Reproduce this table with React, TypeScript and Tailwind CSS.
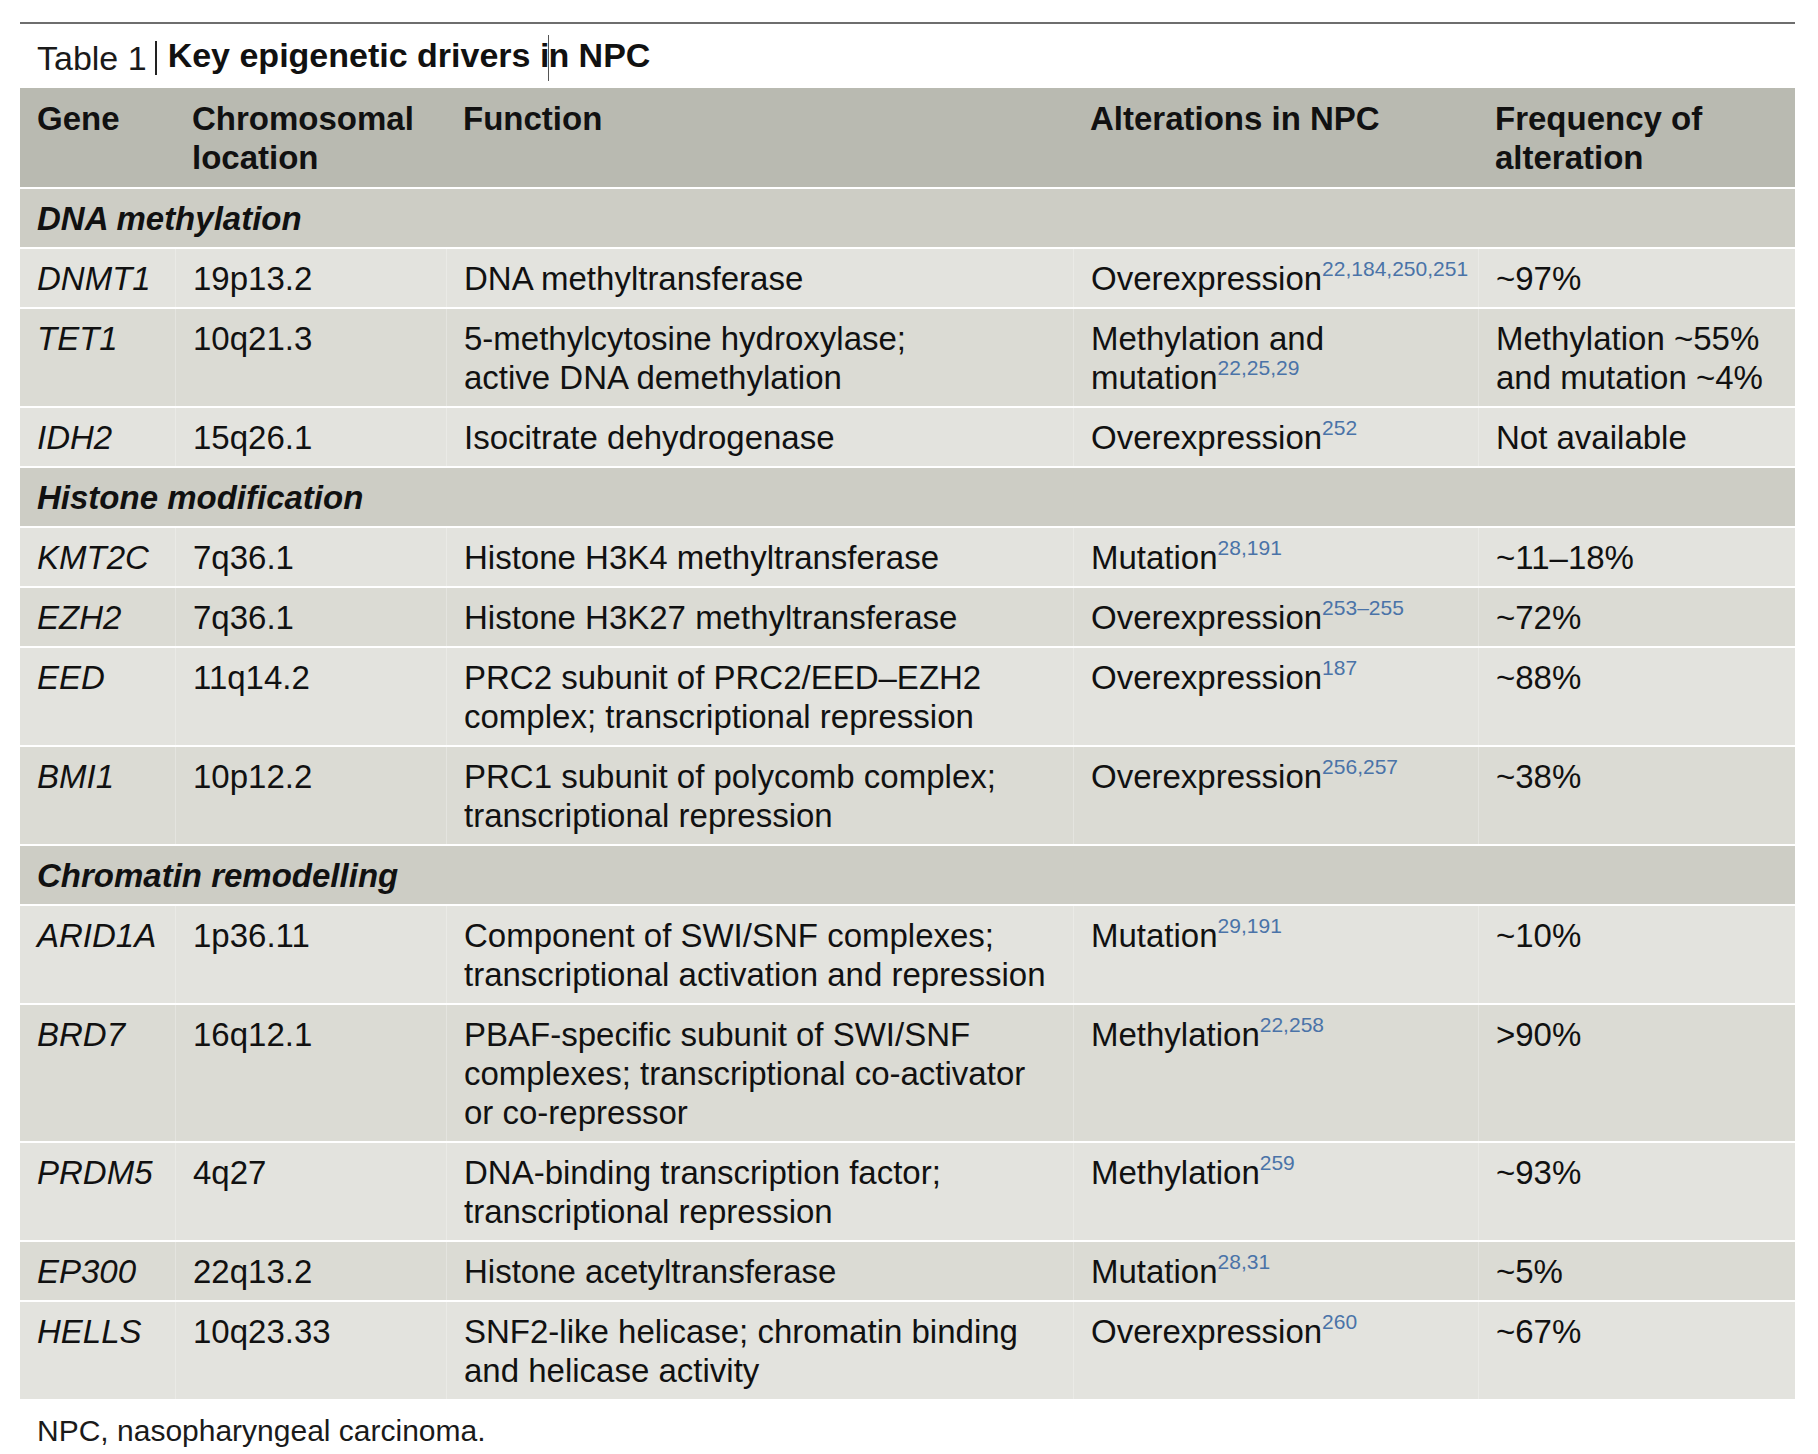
import React, { ReactNode } from "react";

type Row = {
    gene: string;
    loc: string;
    fn: ReactNode;
    alt: ReactNode;
    refs?: string;
    freq: ReactNode;
};

type Section = {
    title: string;
    rows: Row[];
};

const sections: Section[] = [
    {
        title: "DNA methylation",
        rows: [
            { gene: "DNMT1", loc: "19p13.2", fn: "DNA methyltransferase", alt: "Overexpression", refs: "22,184,250,251", freq: "~97%" },
            {
                gene: "TET1",
                loc: "10q21.3",
                fn: <>5-methylcytosine hydroxylase;<br />active DNA demethylation</>,
                alt: <>Methylation and<br />mutation</>,
                refs: "22,25,29",
                freq: <>Methylation ~55%<br />and mutation ~4%</>,
            },
            { gene: "IDH2", loc: "15q26.1", fn: "Isocitrate dehydrogenase", alt: "Overexpression", refs: "252", freq: "Not available" },
        ],
    },
    {
        title: "Histone modification",
        rows: [
            { gene: "KMT2C", loc: "7q36.1", fn: "Histone H3K4 methyltransferase", alt: "Mutation", refs: "28,191", freq: "~11–18%" },
            { gene: "EZH2", loc: "7q36.1", fn: "Histone H3K27 methyltransferase", alt: "Overexpression", refs: "253–255", freq: "~72%" },
            {
                gene: "EED",
                loc: "11q14.2",
                fn: <>PRC2 subunit of PRC2/EED–EZH2<br />complex; transcriptional repression</>,
                alt: "Overexpression",
                refs: "187",
                freq: "~88%",
            },
            {
                gene: "BMI1",
                loc: "10p12.2",
                fn: <>PRC1 subunit of polycomb complex;<br />transcriptional repression</>,
                alt: "Overexpression",
                refs: "256,257",
                freq: "~38%",
            },
        ],
    },
    {
        title: "Chromatin remodelling",
        rows: [
            {
                gene: "ARID1A",
                loc: "1p36.11",
                fn: <>Component of SWI/SNF complexes;<br />transcriptional activation and repression</>,
                alt: "Mutation",
                refs: "29,191",
                freq: "~10%",
            },
            {
                gene: "BRD7",
                loc: "16q12.1",
                fn: <>PBAF-specific subunit of SWI/SNF<br />complexes; transcriptional co-activator<br />or co-repressor</>,
                alt: "Methylation",
                refs: "22,258",
                freq: ">90%",
            },
            {
                gene: "PRDM5",
                loc: "4q27",
                fn: <>DNA-binding transcription factor;<br />transcriptional repression</>,
                alt: "Methylation",
                refs: "259",
                freq: "~93%",
            },
            { gene: "EP300", loc: "22q13.2", fn: "Histone acetyltransferase", alt: "Mutation", refs: "28,31", freq: "~5%" },
            {
                gene: "HELLS",
                loc: "10q23.33",
                fn: <>SNF2-like helicase; chromatin binding<br />and helicase activity</>,
                alt: "Overexpression",
                refs: "260",
                freq: "~67%",
            },
        ],
    },
];

const cols = "grid grid-cols-[155px_271px_627px_405px_317px]";
const cell = "pl-[17px] pt-[10px] pb-[9px] whitespace-nowrap";
// barely visible column rule, as in the print table
const sep = "border-l border-white/25";

export default function App() {
    return (
        <div className="bg-white min-h-[1454px] pt-[22px] px-[20px] text-[#111] font-['Liberation_Sans',Arial,sans-serif]">
            <div className="w-[1775px]">
                {/* top rule */}
                <div className="h-[2px] bg-[#6e6e6e]" />

                {/* caption */}
                <div className="h-[64px] flex items-center pt-[4px] pl-[17px] text-[34px] leading-none">
                    <span className="font-light text-[#1a1a1a]">Table 1</span>
                    <span className="inline-block w-[2px] h-[34px] bg-[#222] ml-[8px] mr-[11px]" />
                    <span className="font-bold">
                        Key epigenetic drivers i
                        <span className="inline-block w-px h-[46px] bg-[#555] align-middle -mx-px" />
                        n NPC
                    </span>
                </div>

                {/* table */}
                <div className="text-[33px] leading-[39px]">
                    <div className={`${cols} bg-[#b9bab1] font-bold`}>
                        <div className="pl-[17px] pt-[11px] pb-[10px]">Gene</div>
                        <div className="pl-[17px] pt-[11px] pb-[10px]">
                            Chromosomal
                            <br />
                            location
                        </div>
                        <div className="pl-[17px] pt-[11px] pb-[10px]">Function</div>
                        <div className="pl-[17px] pt-[11px] pb-[10px]">Alterations in NPC</div>
                        <div className="pl-[17px] pt-[11px] pb-[10px]">
                            Frequency of
                            <br />
                            alteration
                        </div>
                    </div>

                    {sections.map((s) => (
                        <div key={s.title}>
                            <div className="mt-[2px] bg-[#cdcdc5] pl-[17px] pt-[10px] pb-[9px] font-semibold italic">
                                {s.title}
                            </div>
                            {s.rows.map((r, i) => (
                                <div
                                    key={r.gene}
                                    className={`${cols} mt-[2px] ${i % 2 === 0 ? "bg-[#e3e3de]" : "bg-[#dbdbd4]"}`}
                                >
                                    <div className={`${cell} italic`}>{r.gene}</div>
                                    <div className={`${cell} ${sep}`}>{r.loc}</div>
                                    <div className={`${cell} ${sep}`}>{r.fn}</div>
                                    <div className={`${cell} ${sep}`}>
                                        {r.alt}
                                        {r.refs && (
                                            <sup className="text-[21px] text-[#4a73a8] -top-[0.65em]">{r.refs}</sup>
                                        )}
                                    </div>
                                    <div className={`${cell} ${sep}`}>{r.freq}</div>
                                </div>
                            ))}
                        </div>
                    ))}
                </div>

                {/* footnote */}
                <div className="pl-[17px] pt-[14px] text-[30px] leading-[36px] text-[#1a1a1a]">
                    NPC, nasopharyngeal carcinoma.
                </div>
            </div>
        </div>
    );
}
